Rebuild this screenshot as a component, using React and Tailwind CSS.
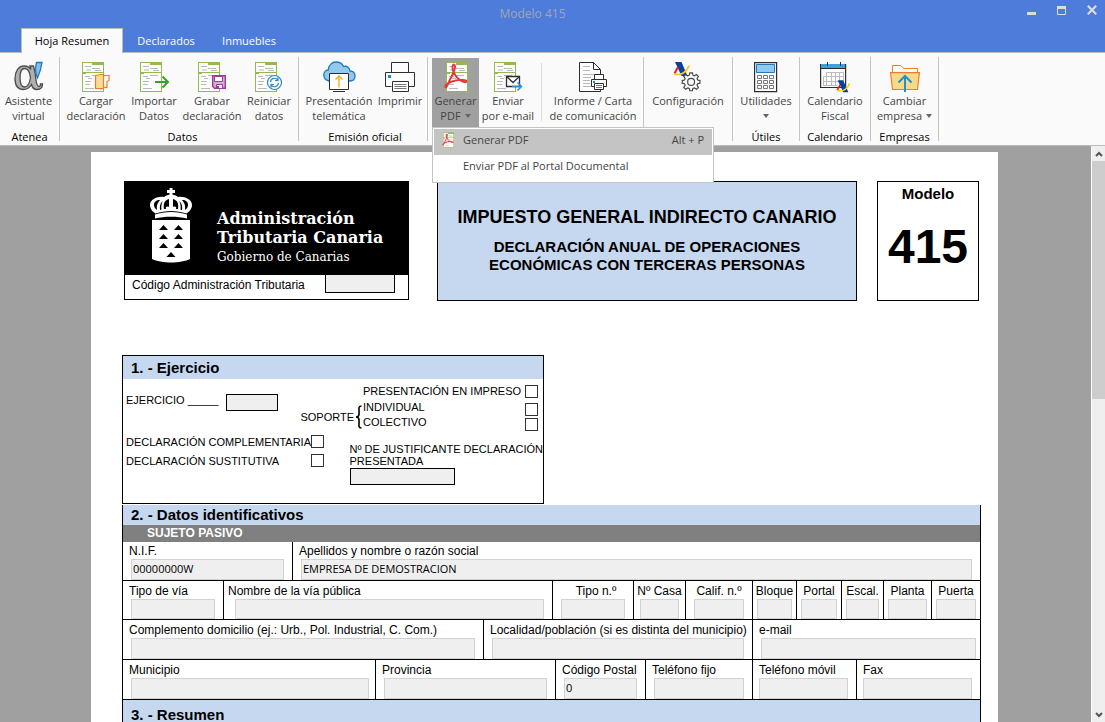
import React from 'react';

const GREEN = '#93b94f';

function DocBase() {
  return (
    <g>
      <rect x="0.5" y="1.5" width="21" height="29" fill="#fdfdfd" stroke={GREEN} />
      <path d="M10 1h12v3H10zM0 11h4v2H0zM4 11h18v1H4z" fill={GREEN} />
      <path d="M3 5.500h6M10 7.500h8M4 9h5M13 9.500h6M3 15.500h5M10 14.500h8M6 17.500h4M3 20.500h6M3 23.500h5M3 27.500h9" stroke="#b9b9b9" fill="none" />
    </g>
  );
}

function DocIcon({ children }) {
  return (
    <svg width="28" height="32" viewBox="0 0 28 32" className="overflow-visible" aria-hidden="true">
      <DocBase />
      {children}
    </svg>
  );
}

const AlphaIcon = () => (
  <svg width="30" height="32" viewBox="0 0 30 32" aria-hidden="true">
    <path fillRule="evenodd" d="M10 5C4.500 5 1 10.500 1 17.500S4 28.500 9.500 28.500c3.500 0 6-1.800 8-5 .8 3.500 2.500 5 5.500 5 3.500 0 5.500-2 5.500-5.500h-2c0 1.500-.5 2.500-1.500 2.500-1.500 0-2.500-3-3-6.500-.3-3-.8-8-2.500-14H16l1 3.500C15.500 6 13 5 10 5zM10.500 7.500c3.500 0 5.500 3.500 6 9.500-1 5.500-3 9-6 9s-4.500-4-4.500-9.500 1.500-9 4.500-9z" fill="#b0b0b0" stroke="#4c4c4c" strokeWidth="1.300" />
    <path d="M22.500 1.500h5.500c-.8 5.500-2.500 11-4.500 15.500-1.800-4-2.500-10-1-15.500z" fill="#7fc0ee" stroke="#2277b8" strokeWidth="1.300" />
  </svg>
);
const LoadIcon = () => (
  <DocIcon>
    <path d="M19 14.500h8v5l-2 1v6h-3l-3 1.500z" fill="#fafafa" stroke="#ec7d2c" strokeWidth="1.200" />
    <path d="M13.500 14.500l5-1h3v14h-8z" fill="#f7dc93" stroke="#ec7d2c" strokeWidth="1.200" />
  </DocIcon>
);
const ImportIcon = () => (
  <DocIcon>
    <path d="M15 21h13M22.500 15.500L28 21l-5.500 5.500" fill="none" stroke="#38a02c" strokeWidth="2" />
  </DocIcon>
);
const SaveIcon = () => (
  <DocIcon>
    <path d="M14.700 14.700h12.600v12.600H16.500l-1.800-1.800z" fill="#dba9d8" stroke="#943f93" strokeWidth="1.400" />
    <path d="M16.500 15.500h8v5h-8zM18.500 23.500h6v4h-6z" fill="#fff" stroke="#943f93" />
    <path d="M19 25h2v2h-2z" fill="#943f93" />
  </DocIcon>
);
const ResetIcon = () => (
  <DocIcon>
    <circle cx="19.500" cy="21.500" r="7" fill="#fdfdfd" stroke="#2d87c3" strokeWidth="1.200" />
    <path d="M15.500 21c.5-4 5-5 7.500-2M23 16.500V19.500h-3M23.500 22c-.5 4-5 5-7.500 2M16 26.500V23.500h3" fill="none" stroke="#2d87c3" strokeWidth="1.200" />
  </DocIcon>
);
const MailIcon = () => (
  <DocIcon>
    <path d="M12.500 15.500h13v10h-13z" fill="#fff" stroke="#2e2e2e" strokeWidth="1.300" />
    <path d="M12.500 15.500l6.500 6 6.500-6" fill="none" stroke="#2e2e2e" strokeWidth="1.300" />
    <path d="M18 25.500h9.500M23.500 21.500l4 4-4 4" fill="none" stroke="#2d8fd0" strokeWidth="1.500" />
  </DocIcon>
);
const PdfIcon = ({ size = 'h-8 w-6' }) => (
  <svg viewBox="0 0 24 32" className={size} aria-hidden="true">
    <g transform="translate(2 0)"><DocBase /></g>
    <path d="M1.500 26c-1.500-2 5-5.500 10-6.500s11.500-1 11 1-6-.5-9-3.500-5.500-8.500-5-11.500 3-2.500 2.500 1-3 8-5 12-3.500 9-4.500 7.500z" fill="none" stroke="#e8383d" strokeWidth="1.900" />
  </svg>
);
const CloudIcon = () => (
  <svg width="33" height="32" viewBox="0 0 33 32" aria-hidden="true">
    <path d="M6 20C2 19 .8 16.500 .8 14c0-3.500 2.500-5 4.500-5C5.500 4 9 1 13 1s6.500 2 7.500 4.500C24 4.500 27 7 27 10c3-.2 5 2 5 5s-2 5-5 5z" fill="#92c9ee" stroke="#2479ba" strokeWidth="1.300" />
    <path d="M6.500 12.500h19v16h-19z" fill="#fff" stroke="#2e2e2e" />
    <path d="M10 30.500h12" stroke="#2e2e2e" />
    <path d="M16 26.500V15M12.500 18.500L16 15l3.500 3.500" fill="none" stroke="#f4ab29" strokeWidth="1.400" />
  </svg>
);
const PrinterIcon = () => (
  <svg width="30" height="32" viewBox="0 0 30 32" aria-hidden="true">
    <path d="M6.500 11V1.500h17V11M6.500 25.500h-6v-14h29v14h-6" fill="#fdfdfd" stroke="#2e2e2e" />
    <path d="M7.500 20.500h16v10h-16z" fill="#fff" stroke="#2e2e2e" />
    <path d="M9.500 23.500h12M9.500 25.500h12M9.500 27.500h12" stroke="#777" />
    <path d="M3 14h3v3H3z" fill="#2d87c3" />
  </svg>
);
const ReportIcon = () => (
  <svg width="28" height="32" viewBox="0 0 28 32" aria-hidden="true">
    <path d="M.5 1.500h14l7 7v22H.5z" fill="#fdfdfd" stroke="#2e2e2e" />
    <path d="M14.500 1.500v7h7" fill="none" stroke="#2e2e2e" />
    <path d="M4 5.500h7M4 9.500h7M4 13.500h12M4 16.500h8M4 19.500h7M4 22.500h7M4 25.500h8" stroke="#b9b9b9" />
    <path d="M15.500 18v-4.500h9V18M15.500 25.500h-3v-7h15v7h-3" fill="#fdfdfd" stroke="#2e2e2e" />
    <path d="M15.500 22.500h9v6h-9z" fill="#fff" stroke="#2e2e2e" />
    <path d="M17 24.500h6M17 26.500h6" stroke="#777" />
    <path d="M14 20h2v2h-2z" fill="#2d87c3" />
  </svg>
);
const AgencyMark = () => (
  <g>
    <path d="M2 1h6.500l6 14H8.500z" fill="#0c3f9e" />
    <path d="M5 6L1.500 12.500" stroke="#e0242b" strokeWidth="2" fill="none" />
    <path d="M1 13c7 2 13-2 15-8.500" stroke="#f6cf1c" strokeWidth="1.800" fill="none" />
  </g>
);
const ConfigIcon = () => (
  <svg width="30" height="32" viewBox="0 0 30 32" aria-hidden="true">
    <AgencyMark />
    <g fill="#fafafa" stroke="#4a4a4a" strokeWidth="1.400" transform="translate(9.500 11) scale(.86)">
      <path d="M8.500 1h3l.6 2.700 1.800.8L16.300 3l2.200 2.200-1.600 2.400.8 1.800 2.600.6v3l-2.600.6-.8 1.800 1.600 2.400-2.200 2.200-2.400-1.500-1.800.7-.6 2.600h-3l-.6-2.600-1.800-.7L3.700 20l-2.200-2.200 1.600-2.400-.8-1.800L-.3 13v-3l2.600-.6.8-1.800-1.600-2.400L3.700 3l2.400 1.500 1.800-.8z" />
      <circle cx="10" cy="11.500" r="4" />
    </g>
  </svg>
);
const CalcIcon = () => (
  <svg width="24" height="32" viewBox="0 0 24 32" aria-hidden="true">
    <path d="M.6 1.600h22v29H.6z" fill="#fdfdfd" stroke="#2e2e2e" strokeWidth="1.200" />
    <path d="M2.500 3.500h18v8h-18z" fill="#92c9ee" stroke="#2479ba" />
    <path d="M3.500 14.500h4v3h-4zM9.500 14.500h4v3h-4zM15.500 14.500h4v3h-4zM3.500 19.500h4v3h-4zM9.500 19.500h4v3h-4zM15.500 19.500h4v3h-4zM3.500 24.500h4v3h-4zM9.500 24.500h4v3h-4zM15.500 24.500h4v3h-4z" fill="#fff" stroke="#777" />
  </svg>
);
const CalendarIcon = () => (
  <svg width="30" height="32" viewBox="0 0 30 32" aria-hidden="true">
    <path d="M.6 3.500h25v23H.6z" fill="#fdfdfd" stroke="#2e2e2e" strokeWidth="1.200" />
    <path d="M1 3h24v4.500H1z" fill="#3ba3dc" />
    <path d="M7.500 1v4M20.500 1v4M1 7.500h24" stroke="#2e2e2e" />
    <path d="M6.500 11.500h17v9h-17zM3.500 15.500h20M3.500 15.500v9h14M6.500 20.500h-3M6.500 20v4M11.500 11v13M15.500 11v13M19.500 11v9" fill="none" stroke="#bcbcbc" />
    <g transform="translate(16 18.500) scale(.85)"><AgencyMark /></g>
  </svg>
);
const FolderIcon = () => (
  <svg width="30" height="32" viewBox="0 0 30 32" aria-hidden="true">
    <path d="M2.500 11V4.500h8l3.500 3h13.500V11" fill="#fff" stroke="#ec7d2c" />
    <path d="M.6 11.600h28.800L27.500 28.500h-25z" fill="#f7d98c" stroke="#ec7d2c" strokeWidth="1.200" />
    <path d="M15 31V15.500M8.500 21.500L15 15 21.500 21.500" fill="none" stroke="#2191d0" strokeWidth="2" />
  </svg>
);

const Caret = () => (
  <svg width="6" height="4" viewBox="0 0 6 4" className="inline-block align-middle" aria-hidden="true">
    <path d="M0 0h6L3 4z" fill="#666" />
  </svg>
);

function Tool({ icon, lines, className, active, caret, ...rest }) {
  return (
    <button
      type="button"
      className={`flex shrink-0 flex-col items-center whitespace-nowrap text-[11px] leading-[15px] text-[#444] ${active ? 'mt-px h-[69px] bg-[#a0a0a0] pt-[3px]' : 'h-[70px] pt-1 hover:bg-[#e4e4e4]'} ${className}`}
      {...rest}
    >
      <span className="flex h-8 items-start">{icon}</span>
      <span>{lines[0]}</span>
      <span className="flex h-[15px] items-center gap-1">
        {lines[1]}
        {caret && <Caret />}
      </span>
    </button>
  );
}

function Group({ label, className = '', children }) {
  return (
    <section className={`flex h-[84px] shrink-0 flex-col border-r border-[#c4c4c4] ${className}`}>
      <div className="flex h-[70px]">{children}</div>
      {label && <h2 className="h-[14px] self-center text-[11px] leading-5 text-black">{label}</h2>}
    </section>
  );
}

function PdfMenu() {
  return (
    <div role="menu" className="absolute left-0 top-full z-10 w-[282px] border border-[#c4c4c4] bg-white p-px text-[11px] text-[#444]">
      <button type="button" role="menuitem" className="flex h-[26px] w-full items-center bg-[#c4c4c4] pb-1 pl-2 pr-2 text-left">
        <span className="w-[21px]"><PdfIcon size="h-4 w-3" /></span>
        <span className="flex-1">Generar PDF</span>
        <span>Alt + P</span>
      </button>
      <button type="button" role="menuitem" className="flex h-[26px] w-full items-center pb-1 pl-[29px] text-left">
        Enviar PDF al Portal Documental
      </button>
    </div>
  );
}

function Ribbon() {
  return (
    <div className="flex h-[94px] border-y border-[#bcbcbc] bg-[#fafafa] pt-1">
      <Group label="Atenea" className="w-[60px]">
        <Tool icon={<AlphaIcon />} lines={['Asistente', 'virtual']} className="w-[57px]" />
      </Group>
      <Group label="Datos" className="w-[239px] pl-[7px]">
        <Tool icon={<LoadIcon />} lines={['Cargar', 'declaración']} className="w-[58px]" />
        <Tool icon={<ImportIcon />} lines={['Importar', 'Datos']} className="w-[58px]" />
        <Tool icon={<SaveIcon />} lines={['Grabar', 'declaración']} className="w-[58px]" />
        <Tool icon={<ResetIcon />} lines={['Reiniciar', 'datos']} className="w-14" />
      </Group>
      <Group label="Emisión oficial" className="w-[129px] pl-1">
        <Tool icon={<CloudIcon />} lines={['Presentación', 'telemática']} className="w-[72px]" />
        <Tool icon={<PrinterIcon />} lines={['Imprimir']} className="w-[50px]" />
      </Group>
      <Group className="w-[216px] pl-1">
        <div className="relative h-[70px]">
          <Tool icon={<PdfIcon />} lines={['Generar', 'PDF']} caret active aria-haspopup="menu" aria-expanded="true" className="w-[47px]" />
          <PdfMenu />
        </div>
        <Tool icon={<MailIcon />} lines={['Enviar', 'por e-mail']} className="w-[58px]" />
        <div className="ml-1 mt-1.5 h-[58px] border-r border-[#dadada]" />
        <Tool icon={<ReportIcon />} lines={['Informe / Carta', 'de comunicación']} className="w-[102px]" />
      </Group>
      <Group className="w-[89px]">
        <Tool icon={<ConfigIcon />} lines={['Configuración']} className="w-[88px]" />
      </Group>
      <Group label="Útiles" className="w-[67px]">
        <Tool icon={<CalcIcon />} lines={['Utilidades']} caret className="w-[66px]" />
      </Group>
      <Group label="Calendario" className="w-[71px]">
        <Tool icon={<CalendarIcon />} lines={['Calendario', 'Fiscal']} className="w-[70px]" />
      </Group>
      <Group label="Empresas" className="w-[68px]">
        <Tool icon={<FolderIcon />} lines={['Cambiar', 'empresa']} caret className="w-[67px]" />
      </Group>
    </div>
  );
}

function TitleBar() {
  return (
    <header className="bg-[#4d7cdb]">
      <div className="grid h-7 grid-cols-[1fr_auto_1fr] items-center">
        <h1 className="col-start-2 pr-10 text-[12px] text-[#a0a5b5]">Modelo 415</h1>
        <div className="flex justify-end gap-5 self-start pr-2 pt-1 text-[#dcdcdc]">
          <button type="button" aria-label="Minimizar"><svg width="10" height="12" viewBox="0 0 10 12"><path d="M0 8h9v3H0z" fill="currentColor" /></svg></button>
          <button type="button" aria-label="Maximizar"><svg width="10" height="12" viewBox="0 0 10 12"><path d="M.5 2.500h8v8h-8z" fill="none" stroke="currentColor" /><path d="M0 2h9v3H0z" fill="currentColor" /></svg></button>
          <button type="button" aria-label="Cerrar"><svg width="10" height="12" viewBox="0 0 10 12"><path d="M.8 1.800l8.400 8.400M9.200 1.800L.8 10.200" stroke="currentColor" strokeWidth="2.200" /></svg></button>
        </div>
      </div>
      <nav className="flex h-6 items-stretch pl-[21px] text-[11px]">
        <a href="#hoja" aria-current="page" className="relative z-10 -mb-px flex w-[102px] items-center justify-center border border-b-0 border-[#bcbcbc] bg-[#fafafa] text-black">Hoja Resumen</a>
        <a href="#declarados" className="flex w-[86px] items-center justify-center pt-0.5 text-white">Declarados</a>
        <a href="#inmuebles" className="flex w-20 items-center justify-center pt-0.5 text-white">Inmuebles</a>
      </nav>
    </header>
  );
}

const CoatOfArms = () => (
  <svg width="44" height="76" viewBox="0 0 44 76" className="shrink-0" aria-hidden="true">
    <g fill="#fff">
      <path d="M20.500 1h3v2H26v3h-2.500v2h-3V6H18V3h2.500z" />
      <path d="M3 33h38v39c-4 2-12 3.500-19 3.500S7 74 3 72z" />
      <path d="M6 27.500c9-3.500 23-3.500 32 0v4c-9-2.500-23-2.500-32 0z" />
      <path d="M22 7.500c-3 0-5 1-7 2.500C9 9 1 12 1 18c0 4 3 7 5.500 8.500 10-3.500 21-3.500 31 0C40 25 43 22 43 18c0-6-8-9-14-8-2-1.500-4-2.500-7-2.500z" />
    </g>
    <g fill="#000">
      <path d="M11 13c-4 0-6 2-6 5 0 2 1.500 4 3 5 0-3-1-5 3-10zM33 13c4 0 6 2 6 5 0 2-1.500 4-3 5 0-3 1-5-3-10z" />
      <path d="M20 12c-4 1-6 4-5 10h2c-1-2 1-3 3-2zM24 12c4 1 6 4 5 10h-2c1-2-1-3-3-2zM13.500 14c-2.500 3-3 5-2.500 9l1.500-.5c-.5-3 0-5 1-8.500zM30.500 14c2.500 3 3 5 2.500 9l-1.500-.5c.5-3 0-5-1-8.500z" />
    </g>
    <path d="M14.500 38l4.500 5H10zM29.500 38l4.500 5H25zM14.500 47l4.500 5H10zM29.500 47l4.500 5H25zM14.500 56l4.500 5H10zM29.500 56l4.500 5H25zM22 65l4.500 5h-9z" fill="#000" />
  </svg>
);

function FormHeader() {
  return (
    <div className="flex items-stretch px-0.5">
      <div className="mb-px flex w-[285px] shrink-0 flex-col border border-black">
        <div className="flex h-[93px] items-start bg-black pl-6 pt-[5px] font-['DejaVu_Serif',serif] text-white">
          <CoatOfArms />
          <div className="whitespace-nowrap pl-6 pt-[22px]">
            <p className="text-[16px] font-bold leading-[19px]">Administración</p>
            <p className="text-[16px] font-bold leading-[19px]">Tributaria Canaria</p>
            <p className="text-[12px] leading-5">Gobierno de Canarias</p>
          </div>
        </div>
        <label className="flex h-6 items-start justify-between pl-[7px] pr-[13px] text-[12px] leading-5">
          Código Administración Tributaria
          <input readOnly className="h-[18px] w-[70px] border border-t-0 border-black bg-[#efefef] px-1" />
        </label>
      </div>
      <div className="ml-7 mr-5 flex h-[120px] flex-1 flex-col items-center whitespace-nowrap border border-black bg-[#c6d8f0] pt-[23px] text-center font-bold">
        <p className="text-[18px] leading-6">IMPUESTO GENERAL INDIRECTO CANARIO</p>
        <p className="mt-[9px] text-[15px] leading-[18px]">DECLARACIÓN ANUAL DE OPERACIONES</p>
        <p className="text-[15px] leading-[18px]">ECONÓMICAS CON TERCERAS PERSONAS</p>
      </div>
      <div className="flex w-[102px] flex-col items-center border border-black font-bold">
        <p className="pt-0.5 text-[15px] leading-5">Modelo</p>
        <p className="pt-4 text-[48px] leading-[54px]">415</p>
      </div>
    </div>
  );
}

function Check({ label, className = '', labelClass = '' }) {
  return (
    <label className={`flex items-center ${className}`}>
      <span className={labelClass}>{label}</span>
      <input type="checkbox" className="size-[13px] shrink-0 appearance-none border border-[#333] bg-white checked:bg-[#333]" />
    </label>
  );
}

function Ejercicio() {
  return (
    <section className="w-[422px] border border-black">
      <h2 className="h-[23px] bg-[#c6d8f0] pl-2 text-[15px] font-bold leading-6">1. - Ejercicio</h2>
      <div className="flex h-14 text-[11px] leading-[13px]">
        <label className="flex w-[176px] items-start pl-[3px] pt-[15px]">
          <span className="w-[100px]">EJERCICIO _____</span>
          <input readOnly className="h-[17px] w-[52px] border border-black bg-[#efefef] px-1" />
        </label>
        <div className="flex flex-1 flex-col pl-16 pr-[5px]">
          <Check label="PRESENTACIÓN EN IMPRESO" className="mt-1.5 justify-between" />
          <div role="group" aria-label="Soporte" className="mt-1 flex items-center">
            <span className="-ml-16 flex w-16 items-center justify-end">
              SOPORTE
              <svg width="9" height="24" viewBox="0 0 9 24" aria-hidden="true"><path d="M7.500 1C3.500 1 5.500 5 5 9c0 2-1 3-3 3 2 0 3 1 3 3 .5 4-1.500 8 2.500 8" fill="none" stroke="#000" strokeWidth="1.600" /></svg>
            </span>
            <span className="flex flex-1 flex-col">
              <Check label="INDIVIDUAL" className="h-[15px] justify-between" labelClass="pb-1" />
              <Check label="COLECTIVO" className="h-[15px] justify-between" labelClass="pb-1" />
            </span>
          </div>
        </div>
      </div>
      <div className="flex h-[68px] text-[11px] leading-3">
        <div className="flex w-[227px] flex-col gap-1.5 pl-[3px]">
          <Check label="DECLARACIÓN COMPLEMENTARIA" labelClass="w-[185px] whitespace-nowrap" />
          <Check label="DECLARACIÓN SUSTITUTIVA" labelClass="w-[185px] whitespace-nowrap" />
        </div>
        <label className="flex-1 whitespace-nowrap pt-2">
          Nº DE JUSTIFICANTE DECLARACIÓN<br />PRESENTADA
          <input readOnly className="mt-px block h-[17px] w-[105px] border border-black bg-[#efefef] px-1" />
        </label>
      </div>
    </section>
  );
}

function Field({ label, className, labelClass = '', value = '', last }) {
  return (
    <label className={`flex h-full flex-col ${last ? '' : 'border-r border-black'} ${className}`}>
      <span className={`flex flex-1 items-center whitespace-nowrap text-[12px] leading-4 ${labelClass}`}>{label}</span>
      <input
        defaultValue={value}
        className="h-[21px] w-full min-w-0 border border-[#d2d2d2] bg-[#efefef] px-px pb-0.5 font-['Open_Sans',sans-serif] text-[11px]"
      />
    </label>
  );
}

const Row = ({ children, className = 'h-10 [&_span]:pt-0.5' }) => (
  <div className={`flex border-b border-black ${className}`}>{children}</div>
);

function Identificativos() {
  return (
    <section className="mt-px border-x border-black">
      <h2 className="h-5 bg-[#c6d8f0] pl-2 text-[15px] font-bold leading-5">2. - Datos identificativos</h2>
      <h3 className="h-[17px] bg-[#808080] pl-6 text-[12px] font-bold leading-4 text-white">SUJETO PASIVO</h3>
      <Row className="h-[39px]">
        <Field label="N.I.F." value="00000000W" className="w-[170px] px-2" labelClass="-ml-0.5" />
        <Field label="Apellidos y nombre o razón social" value="EMPRESA DE DEMOSTRACION" className="flex-1 px-2" labelClass="-ml-0.5" last />
      </Row>
      <Row className="h-[39px] [&_span]:pt-0.5">
        <Field label="Tipo de vía" className="w-[101px] px-2" labelClass="-ml-0.5" />
        <Field label="Nombre de la vía pública" className="min-w-0 flex-1 pl-[11px] pr-2" labelClass="-ml-[7px]" />
        <Field label="Tipo n.º" className="w-[81px] px-2" labelClass="justify-center pl-1.5" />
        <Field label="Nº Casa" className="w-[52px] px-1.5" labelClass="justify-center" />
        <Field label="Calif. n.º" className="w-[67px] px-2" labelClass="justify-center" />
        <Field label="Bloque" className="w-11 px-1" labelClass="justify-center" />
        <Field label="Portal" className="w-[45px] px-1" labelClass="justify-center" />
        <Field label="Escal." className="w-[42px] px-1" labelClass="justify-center" />
        <Field label="Planta" className="w-12 px-1" labelClass="justify-center" />
        <Field label="Puerta" className="w-12 px-1" labelClass="justify-center" last />
      </Row>
      <Row>
        <Field label="Complemento domicilio (ej.: Urb., Pol. Industrial, C. Com.)" className="min-w-0 flex-1 px-2" labelClass="-ml-0.5" />
        <Field label="Localidad/población (si es distinta del municipio)" className="w-[269px] px-2" labelClass="-ml-0.5" />
        <Field label="e-mail" className="w-[227px] pl-2 pr-1" labelClass="-ml-0.5" last />
      </Row>
      <Row>
        <Field label="Municipio" className="min-w-0 flex-1 pl-2 pr-1.5" labelClass="-ml-0.5" />
        <Field label="Provincia" className="w-[180px] px-2" labelClass="-ml-0.5" />
        <Field label="Código Postal" value="0" className="w-[90px] px-2" labelClass="-ml-0.5" />
        <Field label="Teléfono fijo" className="w-[107px] px-2" labelClass="-ml-0.5" />
        <Field label="Teléfono móvil" className="w-[104px] pl-1.5 pr-2" />
        <Field label="Fax" className="w-[123px] pl-1.5 pr-2" last />
      </Row>
      <h2 className="bg-[#c6d8f0] pb-8 pl-2 pt-[5px] text-[15px] font-bold leading-5">3. - Resumen</h2>
    </section>
  );
}

function ScrollBar() {
  return (
    <div className="flex w-3.5 shrink-0 flex-col items-stretch border-l border-white bg-[#efefef]" aria-hidden="true">
      <div className="flex h-[15px] items-center justify-center">
        <svg width="8" height="6" viewBox="0 0 8 6"><path d="M1 5l3-3 3 3" fill="none" stroke="#555" strokeWidth="2" /></svg>
      </div>
      <div className="h-[238px] bg-[#cdcdcd]" />
      <div className="mt-auto flex h-[15px] items-center justify-center">
        <svg width="8" height="6" viewBox="0 0 8 6"><path d="M1 1l3 3 3-3" fill="none" stroke="#555" strokeWidth="2" /></svg>
      </div>
    </div>
  );
}

export default function App() {
  return (
    <div className="flex h-screen flex-col overflow-hidden font-['Open_Sans',sans-serif]">
      <TitleBar />
      <Ribbon />
      <div className="flex min-h-0 flex-1">
        <main className="flex-1 overflow-hidden bg-[#a0a0a0] pl-[91px] pr-[93px] pt-1.5">
          <div className="bg-white pl-[31px] pr-[17px] pt-[29px] font-['Liberation_Sans',sans-serif] text-black">
            <FormHeader />
            <div className="h-[54px]" />
            <Ejercicio />
            <Identificativos />
          </div>
        </main>
        <ScrollBar />
      </div>
    </div>
  );
}
